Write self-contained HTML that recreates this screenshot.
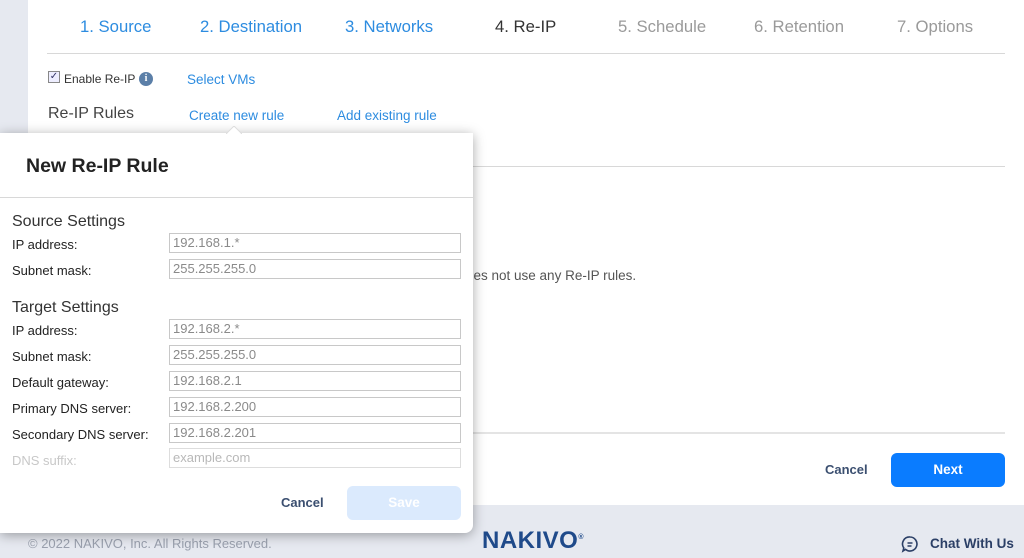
<!DOCTYPE html>
<html><head><meta charset="utf-8"><style>
*{margin:0;padding:0;box-sizing:border-box}
body{width:1024px;height:558px;overflow:hidden;background:#e6e9f0;font-family:"Liberation Sans",Arial,sans-serif;position:relative}
.main{position:absolute;left:28px;top:0;width:996px;height:505px;background:#fff}
.a{position:absolute;white-space:nowrap}
.tab{font-size:16.7px;top:17px}
.blue{color:#2d8ce0}
.grey{color:#9a9a9a}
.hr{position:absolute;height:1px;background:#d8d8d8}
.dlg{position:absolute;left:0;top:133px;width:473px;height:400px;background:#fff;border-radius:0 0 8px 0;box-shadow:0 2px 12px rgba(0,0,0,.35)}
.lbl{position:absolute;left:12px;font-size:13px;color:#222}
.inp{position:absolute;left:169px;width:292px;height:20px;border:1px solid #c8c8c8;font-size:13px;color:#8a8a8a;padding:2px 3px;line-height:14px}
.sec{position:absolute;left:12px;font-size:16px;color:#333}
</style></head><body>
<div class="main"></div>
<div class="a tab blue" style="left:80px">1. Source</div>
<div class="a tab blue" style="left:200px">2. Destination</div>
<div class="a tab blue" style="left:345px">3. Networks</div>
<div class="a tab" style="left:495px;color:#333">4. Re-IP</div>
<div class="a tab grey" style="left:618px">5. Schedule</div>
<div class="a tab grey" style="left:754px">6. Retention</div>
<div class="a tab grey" style="left:897px">7. Options</div>
<div class="hr" style="left:47px;top:53px;width:958px"></div>
<div class="a" style="left:48px;top:71px;width:12px;height:12px;border:1px solid #888;background:#eef;font-size:10px;line-height:10px;text-align:center;color:#336">✓</div>
<div class="a" style="left:64px;top:72px;font-size:12px;color:#333">Enable Re-IP</div>
<div class="a" style="left:139px;top:72px;width:14px;height:14px;border-radius:50%;background:#5b7fa8;color:#fff;font-size:10px;font-weight:bold;text-align:center;line-height:14px;font-family:'Liberation Serif',serif">i</div>
<div class="a blue" style="left:187px;top:72px;font-size:13.5px">Select VMs</div>
<div class="a" style="left:48px;top:105px;font-size:16px;color:#444">Re-IP Rules</div>
<div class="a blue" style="left:189px;top:108px;font-size:13.5px">Create new rule</div>
<div class="a blue" style="left:337px;top:108px;font-size:13.5px">Add existing rule</div>
<div class="hr" style="left:473px;top:166px;width:532px"></div>
<div class="a" style="left:466px;top:268px;font-size:13.5px;color:#555">oes not use any Re-IP rules.</div>
<div class="hr" style="left:473px;top:432px;width:532px;background:#e4e4e4;height:2px"></div>
<div class="a" style="left:825px;top:462px;font-size:13px;font-weight:bold;color:#3b4f70">Cancel</div>
<div class="a" style="left:891px;top:453px;width:114px;height:34px;background:#0a7cff;border-radius:6px;color:#fff;font-size:13.5px;font-weight:bold;text-align:center;line-height:34px">Next</div>
<div class="a" style="left:28px;top:536px;font-size:13px;color:#9aa0ae">© 2022 NAKIVO, Inc. All Rights Reserved.</div>
<div class="a" style="left:482px;top:527px;font-size:24px;font-weight:bold;color:#1f4a8a;letter-spacing:0.5px">NAKIVO<sup style="font-size:7px">®</sup></div>
<svg class="a" style="left:901px;top:535px" width="18" height="18" viewBox="0 0 18 18"><path d="M9 2a7 7 0 1 1-4.5 12.4L2 16l.8-3A7 7 0 0 1 9 2z" fill="none" stroke="#2b3f66" stroke-width="1.6"/><path d="M6.5 8h5M6.5 11h4" stroke="#2b3f66" stroke-width="1.4"/></svg>
<div class="a" style="left:930px;top:536px;font-size:13.5px;font-weight:bold;color:#2b3f66">Chat With Us</div>
<div class="dlg">
<div class="a" style="left:26px;top:22px;font-size:19.5px;font-weight:bold;color:#222">New Re-IP Rule</div>
<div class="hr" style="left:0;top:64px;width:473px"></div>
<div class="sec" style="top:80px">Source Settings</div>
<div class="lbl" style="top:104px">IP address:</div><div class="inp" style="top:100px">192.168.1.*</div>
<div class="lbl" style="top:130px">Subnet mask:</div><div class="inp" style="top:126px">255.255.255.0</div>
<div class="sec" style="top:166px">Target Settings</div>
<div class="lbl" style="top:190px">IP address:</div><div class="inp" style="top:186px">192.168.2.*</div>
<div class="lbl" style="top:216px">Subnet mask:</div><div class="inp" style="top:212px">255.255.255.0</div>
<div class="lbl" style="top:242px">Default gateway:</div><div class="inp" style="top:238px">192.168.2.1</div>
<div class="lbl" style="top:268px">Primary DNS server:</div><div class="inp" style="top:264px">192.168.2.200</div>
<div class="lbl" style="top:294px">Secondary DNS server:</div><div class="inp" style="top:290px">192.168.2.201</div>
<div class="lbl" style="top:320px;color:#c8c8c8">DNS suffix:</div><div class="inp" style="top:315px;color:#b8b8b8;border-color:#ddd">example.com</div>
<div class="a" style="left:281px;top:362px;font-size:13px;font-weight:bold;color:#3b4f70">Cancel</div>
<div class="a" style="left:347px;top:353px;width:114px;height:34px;background:#dbeafd;border-radius:6px;color:#fff;font-size:13.5px;font-weight:bold;text-align:center;line-height:34px">Save</div>
</div>
<svg class="a" style="left:226px;top:126px" width="16" height="8"><path d="M0 8L8 0L16 8Z" fill="#fff"/><path d="M0 8L8 0L16 8" fill="none" stroke="#ddd"/></svg>
</body></html>
